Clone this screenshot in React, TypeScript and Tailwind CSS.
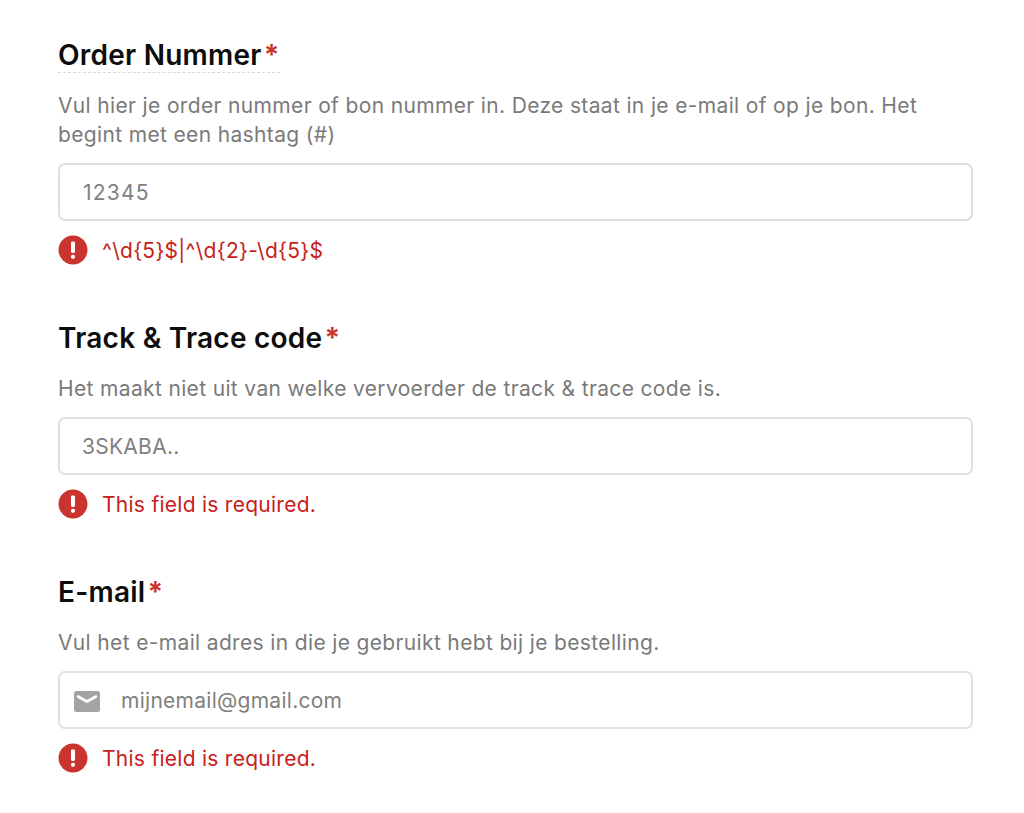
function ErrorIcon() {
  return (
    <svg viewBox="0 0 30 30" className="h-[30px] w-[30px] shrink-0">
      <circle cx="15" cy="15" r="14.5" fill="#c9352e" />
      <rect x="13" y="6.5" width="4" height="11.5" rx="1.4" fill="#fff" />
      <circle cx="15" cy="21.8" r="2.1" fill="#fff" />
    </svg>
  );
}

function MailIcon() {
  return (
    <svg viewBox="0 0 26 21" className="h-[21px] w-[26px]">
      <rect width="26" height="21" rx="2.5" fill="#a3a3a3" />
      <path d="M4 5.5 L13 10.5 L22 5.5" fill="none" stroke="#fff" strokeWidth="2.6" strokeLinecap="round" strokeLinejoin="round" />
    </svg>
  );
}

function Field({
  label,
  help,
  placeholder,
  error,
  dotted,
  icon,
  digits,
}: {
  label: string;
  help: string;
  placeholder: string;
  error: string;
  dotted?: boolean;
  icon?: boolean;
  digits?: boolean;
}) {
  return (
    <div className="mb-[54px]">
      <div className="flex h-[38px] items-center">
        <span
          className={
            dotted
              ? "border-b border-dashed border-[#d9d9d9] text-[28px] font-semibold leading-[34px] tracking-[0.25px] text-[#0d0d0d]"
              : "text-[28px] font-semibold leading-[34px] tracking-[0.25px] text-[#0d0d0d]"
          }
        >
          {label}
          <span className="ml-[2px] font-bold text-[#c9352e]">*</span>
        </span>
      </div>
      <p className="mt-[17px] text-[21px] leading-[29px] tracking-[0.35px] text-[#7a7a7a]">{help}</p>
      <div className="mt-[14px] flex h-[58px] items-center rounded-[7px] border-2 border-[#e0e0e0] bg-white pl-[14px] pt-[2px]">
        {icon ? (
          <div className="flex items-center gap-[21px]">
            <MailIcon />
            <span className="text-[21px] tracking-[0.27px] text-[#808080]">{placeholder}</span>
          </div>
        ) : (
          <span
            className={
              digits
                ? "pl-[9px] text-[21px] tracking-[1.2px] text-[#808080]"
                : "pl-[8px] text-[21px] tracking-[0.27px] text-[#808080]"
            }
          >
            {placeholder}
          </span>
        )}
      </div>
      <div className="mt-[14px] flex h-[30px] items-center gap-[14px]">
        <ErrorIcon />
        <span className="pt-[2px] text-[21px] tracking-[0.27px] text-[#c8201a]">{error}</span>
      </div>
    </div>
  );
}

export default function App() {
  return (
    <div className="min-h-[813px] bg-white pl-[58px] pr-[51px] pt-[36px] font-['Inter',sans-serif]">
      <Field
        label="Order Nummer"
        dotted
        help="Vul hier je order nummer of bon nummer in. Deze staat in je e-mail of op je bon. Het begint met een hashtag (#)"
        placeholder="12345"
        digits
        error="^\d{5}$|^\d{2}-\d{5}$"
      />
      <Field
        label="Track & Trace code"
        help="Het maakt niet uit van welke vervoerder de track & trace code is."
        placeholder="3SKABA.."
        error="This field is required."
      />
      <Field
        label="E-mail"
        icon
        help="Vul het e-mail adres in die je gebruikt hebt bij je bestelling."
        placeholder="mijnemail@gmail.com"
        error="This field is required."
      />
    </div>
  );
}
